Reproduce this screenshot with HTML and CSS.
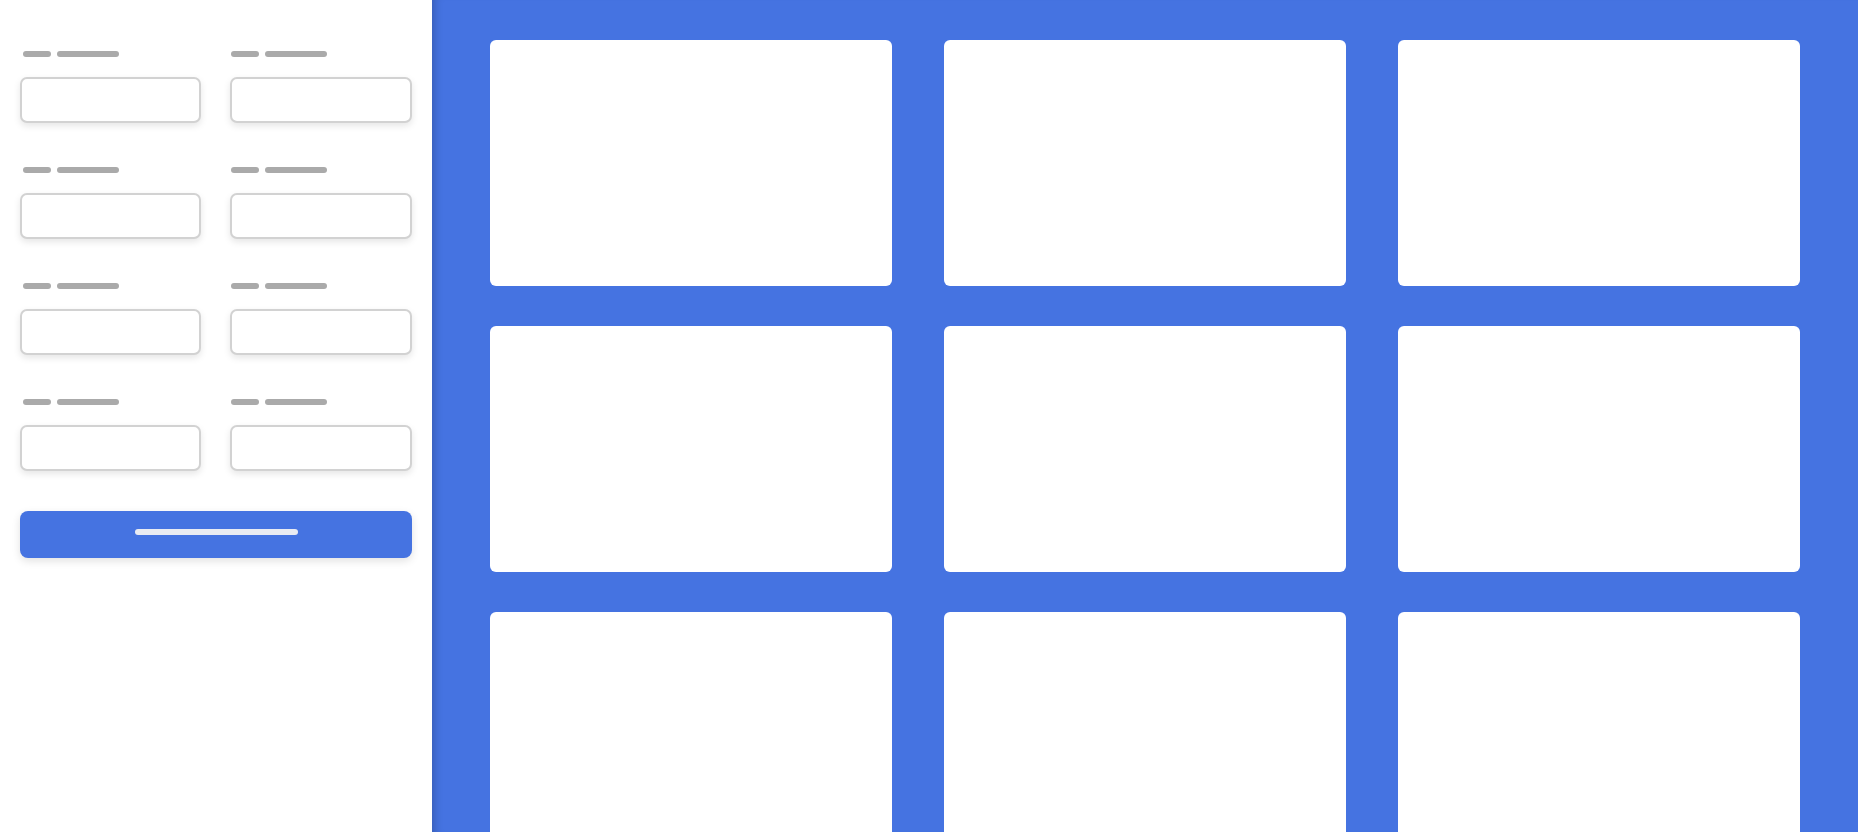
FILE: index.html
```html
<!DOCTYPE html>
<html lang="en">
<head>
<meta charset="utf-8">
<title>Form and grid</title>
<link rel="stylesheet" href="styles.css">
</head>
<body>
<div class="app">
  <aside class="sidebar">
    <form class="form">
      <div class="fields">
        <div class="field"><div class="label"><span class="bar short"></span><span class="bar long"></span></div><input class="input" type="text"></div>
        <div class="field"><div class="label"><span class="bar short"></span><span class="bar long"></span></div><input class="input" type="text"></div>
        <div class="field"><div class="label"><span class="bar short"></span><span class="bar long"></span></div><input class="input" type="text"></div>
        <div class="field"><div class="label"><span class="bar short"></span><span class="bar long"></span></div><input class="input" type="text"></div>
        <div class="field"><div class="label"><span class="bar short"></span><span class="bar long"></span></div><input class="input" type="text"></div>
        <div class="field"><div class="label"><span class="bar short"></span><span class="bar long"></span></div><input class="input" type="text"></div>
        <div class="field"><div class="label"><span class="bar short"></span><span class="bar long"></span></div><input class="input" type="text"></div>
        <div class="field"><div class="label"><span class="bar short"></span><span class="bar long"></span></div><input class="input" type="text"></div>
      </div>
      <button class="submit" type="button"><span class="btn-bar"></span></button>
    </form>
  </aside>
  <main class="board">
    <div class="grid">
      <div class="card"></div>
      <div class="card"></div>
      <div class="card"></div>
      <div class="card"></div>
      <div class="card"></div>
      <div class="card"></div>
      <div class="card"></div>
      <div class="card"></div>
      <div class="card"></div>
    </div>
  </main>
</div>
</body>
</html>
```
FILE: styles.css
```css
* { box-sizing: border-box; }
html, body {
  margin: 0;
  padding: 0;
  height: 100%;
  overflow: hidden;
  font-family: "Roboto", "Liberation Sans", sans-serif;
  background: #ffffff;
}
.app {
  display: flex;
  height: 832px;
}
.sidebar {
  width: 432px;
  flex: 0 0 432px;
  background: #ffffff;
  padding: 51px 20px 0 20px;
}
.form {
  display: flex;
  flex-direction: column;
}
.fields {
  display: grid;
  grid-template-columns: 181px 181px;
  column-gap: 29px;
  row-gap: 44px;
}
.field {
  display: flex;
  flex-direction: column;
}
.label {
  display: flex;
  gap: 6px;
  height: 6px;
  margin: 0 0 20px 3px;
}
.field:nth-child(even) .label { margin-left: 1px; }
.bar {
  display: block;
  height: 6px;
  border-radius: 3px;
  background: #aaaaaa;
}
.bar.short { width: 28px; }
.bar.long { width: 62px; }
.input {
  display: block;
  width: 181px;
  height: 46px;
  margin: 0;
  padding: 0;
  border: 2px solid #d2d2d2;
  border-radius: 7px;
  background: #ffffff;
  box-shadow: 0 3px 7px rgba(0, 0, 0, 0.10);
  outline: none;
}
.field:nth-child(even) .input { width: 182px; }
.submit {
  margin: 40px 0 0 0;
  width: 392px;
  height: 47px;
  border: none;
  border-radius: 8px;
  background: #4573e1;
  box-shadow: 0 3px 8px rgba(0, 0, 0, 0.12);
  display: flex;
  align-items: center;
  justify-content: center;
  padding: 0 0 5px 0;
}
.btn-bar {
  display: block;
  width: 163px;
  height: 6px;
  border-radius: 3px;
  background: #e9ebf2;
}
.board {
  flex: 1;
  background: #4573e1;
  padding: 40px 58px;
  box-shadow: inset 10px 0 10px -8px rgba(0, 0, 0, 0.22);
  overflow: hidden;
}
.grid {
  display: grid;
  grid-template-columns: repeat(3, 402px);
  grid-auto-rows: 246px;
  column-gap: 52px;
  row-gap: 40px;
}
.card {
  background: #ffffff;
  border-radius: 6px;
}
```
